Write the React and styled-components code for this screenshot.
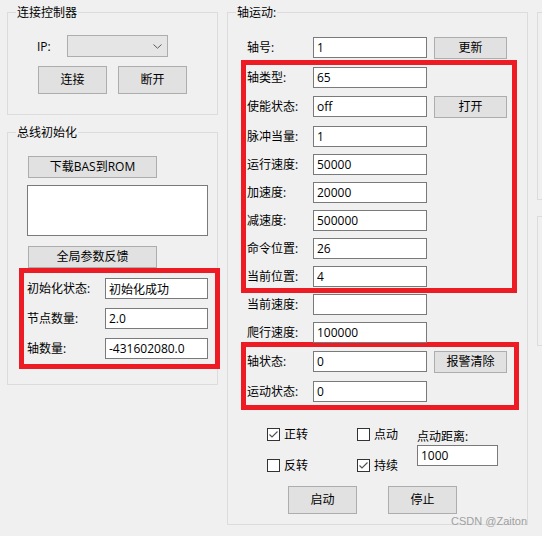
import React from 'react'
import styled, { createGlobalStyle } from 'styled-components';

const GlobalStyle = createGlobalStyle`
  body {
    margin: 0;
    background: #f0f0f0;
  }
`;

function Field({ label, value, labelWidth, inputWidth, top, children }) {
  return (
    <FormRow $mt={top}>
      <Label $w={labelWidth}>{label}</Label>
      <TextBox readOnly value={value} $w={inputWidth} />
      {children}
    </FormRow>
  )
}

function Check({ checked, label }) {
  return (
    <CheckItem>
      <CheckBox>
        {checked && (
          <svg width="11" height="11" viewBox="0 0 11 11">
            <polyline points="1.5,5.5 4,8 9.5,2.5" fill="none" stroke="#505050" strokeWidth="1.1" />
          </svg>
        )}
      </CheckBox>
      <span>{label}</span>
    </CheckItem>
  )
}

function App() {
  return (
    <Window>
      <GlobalStyle />
      <LeftColumn>
        <Group $w={211} $h={110}>
          <Legend>连接控制器</Legend>
          <IpRow>
            <Label $w={30}>IP:</Label>
            <ComboBox>
              <svg width="9" height="5" viewBox="0 0 9 5">
                <polyline points="0.5,0.5 4.5,4.2 8.5,0.5" fill="none" stroke="#5a5a5a" strokeWidth="1" />
              </svg>
            </ComboBox>
          </IpRow>
          <ButtonRow $mt={9} $pl={30} $gap={11}>
            <Button $w={69} $h={28}>连接</Button>
            <Button $w={69} $h={28}>断开</Button>
          </ButtonRow>
        </Group>

        <Group $w={211} $h={260} $mt={10}>
          <Legend>总线初始化</Legend>
          <BlockButton $mt={16} $ml={20}>下载BAS到ROM</BlockButton>
          <MultiLine readOnly />
          <BlockButton $mt={10} $ml={20}>全局参数反馈</BlockButton>
          <Highlight $w={201} $ml={11} $pad="5px 7px 5px 3px">
            <Field label="初始化状态:" value="初始化成功" labelWidth={78} inputWidth={103} />
            <Field label="节点数量:" value="2.0" labelWidth={78} inputWidth={103} top={9} />
            <Field label="轴数量:" value="-431602080.0" labelWidth={78} inputWidth={103} top={9} />
          </Highlight>
        </Group>
      </LeftColumn>

      <Group $w={301} $h={520} $ml={9}>
        <Legend>轴运动:</Legend>
        <Indent>
          <Field label="轴号:" value="1" labelWidth={66} inputWidth={114} top={17}>
            <Button $w={73} $h={22} $ml={7}>更新</Button>
          </Field>
        </Indent>
        <Highlight $w={276} $ml={13} $mt={2} $pad="2px 0 1px 1px">
          <Field label="轴类型:" value="65" labelWidth={66} inputWidth={114} />
          <Field label="使能状态:" value="off" labelWidth={66} inputWidth={114} top={8}>
            <Button $w={73} $h={22} $ml={7}>打开</Button>
          </Field>
          <Field label="脉冲当量:" value="1" labelWidth={66} inputWidth={114} top={9} />
          <Field label="运行速度:" value="50000" labelWidth={66} inputWidth={114} top={7} />
          <Field label="加速度:" value="20000" labelWidth={66} inputWidth={114} top={7} />
          <Field label="减速度:" value="500000" labelWidth={66} inputWidth={114} top={7} />
          <Field label="命令位置:" value="26" labelWidth={66} inputWidth={114} top={7} />
          <Field label="当前位置:" value="4" labelWidth={66} inputWidth={114} top={7} />
        </Highlight>
        <Indent>
          <Field label="当前速度:" value="" labelWidth={66} inputWidth={114} top={1} />
          <Field label="爬行速度:" value="100000" labelWidth={66} inputWidth={114} top={7} />
        </Indent>
        <Highlight $w={278} $ml={13} $mt={-1} $pad="4px 0 3px 1px">
          <Field label="轴状态:" value="0" labelWidth={66} inputWidth={114}>
            <Button $w={73} $h={22} $ml={7}>报警清除</Button>
          </Field>
          <Field label="运动状态:" value="0" labelWidth={66} inputWidth={114} top={9} />
        </Highlight>

        <CheckArea>
          <CheckColumn $w={90}>
            <Check checked label="正转" />
            <Check label="反转" />
          </CheckColumn>
          <CheckColumn $w={60}>
            <Check label="点动" />
            <Check checked label="持续" />
          </CheckColumn>
          <DistanceColumn>
            <SmallLabel>点动距离:</SmallLabel>
            <TextBox readOnly value="1000" $w={81} />
          </DistanceColumn>
        </CheckArea>

        <ButtonRow $mt={14} $pl={60} $gap={31}>
          <Button $w={69} $h={28}>启动</Button>
          <Button $w={69} $h={28}>停止</Button>
        </ButtonRow>
      </Group>

      <RightColumn>
        <EdgeBox $mt={7} $h={188} />
        <EdgeBox $mt={16} $h={130} />
      </RightColumn>

      <Watermark>CSDN @Zaiton</Watermark>
    </Window>
  )
}

export default App

const Window = styled.div`
  position: relative;
  display: flex;
  align-items: flex-start;
  width: 542px;
  height: 536px;
  padding-top: 5px;
  box-sizing: border-box;
  overflow: hidden;
  background: #f0f0f0;
  color: #000;
  font-family: "Open Sans", "Noto Sans CJK SC", sans-serif;
  font-size: 12px;
`;

const LeftColumn = styled.div`
  display: flex;
  flex-direction: column;
  margin-left: 7px;
`;

const RightColumn = styled.div`
  display: flex;
  flex-direction: column;
  margin-left: 9px;
  flex-shrink: 0;
`;

const Group = styled.fieldset`
  box-sizing: border-box;
  flex-shrink: 0;
  width: ${p => p.$w}px;
  height: ${p => p.$h}px;
  min-width: 0;
  margin: ${p => p.$mt || 0}px 0 0 ${p => p.$ml || 0}px;
  padding: 0;
  border: 1px solid #dcdcdc;
`;

const Legend = styled.legend`
  margin-left: 8px;
  padding: 0 1px;
  font-size: 12px;
  line-height: 15px;
`;

const EdgeBox = styled.div`
  box-sizing: border-box;
  width: 30px;
  height: ${p => p.$h}px;
  margin-top: ${p => p.$mt}px;
  border: 1px solid #dcdcdc;
  border-right: none;
`;

const Indent = styled.div`
  padding-left: 19px;
`;

const Highlight = styled.div`
  box-sizing: border-box;
  width: ${p => p.$w}px;
  margin: ${p => p.$mt || 0}px 0 0 ${p => p.$ml}px;
  padding: ${p => p.$pad};
  border: 5px solid #ed1c24;
`;

const FormRow = styled.div`
  display: flex;
  align-items: flex-start;
  height: 21px;
  margin-top: ${p => p.$mt || 0}px;
`;

const Label = styled.span`
  flex-shrink: 0;
  width: ${p => p.$w}px;
  line-height: 21px;
  white-space: nowrap;
`;

const TextBox = styled.input`
  box-sizing: border-box;
  width: ${p => p.$w}px;
  height: 21px;
  margin: 0;
  padding: 0 3px;
  border: 1px solid #7a7a7a;
  border-radius: 0;
  background: #fff;
  color: #000;
  font-family: inherit;
  font-size: 12px;
  outline: none;
`;

const MultiLine = styled.textarea`
  display: block;
  box-sizing: border-box;
  width: 181px;
  height: 51px;
  margin: 7px 0 0 19px;
  padding: 0;
  border: 1px solid #7a7a7a;
  background: #fff;
  resize: none;
  outline: none;
`;

const Button = styled.button`
  box-sizing: border-box;
  flex-shrink: 0;
  width: ${p => p.$w}px;
  height: ${p => p.$h}px;
  margin: 0 0 0 ${p => p.$ml || 0}px;
  padding: 0;
  border: 1px solid #adadad;
  border-radius: 0;
  background: #e1e1e1;
  color: #000;
  font-family: inherit;
  font-size: 12px;
  line-height: 16px;
`;

const BlockButton = styled(Button)`
  display: block;
  width: 129px;
  height: 22px;
  margin: ${p => p.$mt}px 0 0 ${p => p.$ml}px;
`;

const ButtonRow = styled.div`
  display: flex;
  gap: ${p => p.$gap}px;
  margin-top: ${p => p.$mt}px;
  padding-left: ${p => p.$pl}px;
`;

const IpRow = styled.div`
  display: flex;
  align-items: center;
  height: 22px;
  margin-top: 15px;
  padding-left: 29px;
`;

const ComboBox = styled.div`
  box-sizing: border-box;
  display: flex;
  align-items: center;
  justify-content: flex-end;
  width: 101px;
  height: 22px;
  padding-right: 5px;
  border: 1px solid #adadad;
  background: #e5e5e5;
`;

const CheckArea = styled.div`
  display: flex;
  align-items: flex-start;
  height: 44px;
  margin-top: 18px;
  padding-left: 39px;
`;

const CheckColumn = styled.div`
  display: flex;
  flex-direction: column;
  gap: 18px;
  width: ${p => p.$w}px;
`;

const CheckItem = styled.label`
  display: flex;
  align-items: center;
  gap: 4px;
  height: 13px;
  line-height: 13px;
  white-space: nowrap;
`;

const CheckBox = styled.span`
  box-sizing: border-box;
  display: flex;
  align-items: center;
  justify-content: center;
  width: 13px;
  height: 13px;
  border: 1px solid #333;
  background: #fff;
`;

const DistanceColumn = styled.div`
  display: flex;
  flex-direction: column;
  padding-top: 1px;
`;

const SmallLabel = styled.span`
  line-height: 16px;
  white-space: nowrap;
`;

const Watermark = styled.div`
  position: absolute;
  right: 15px;
  bottom: 8px;
  font-family: "Liberation Sans", sans-serif;
  font-size: 11px;
  line-height: 13px;
  color: #a0a0a0;
`;
